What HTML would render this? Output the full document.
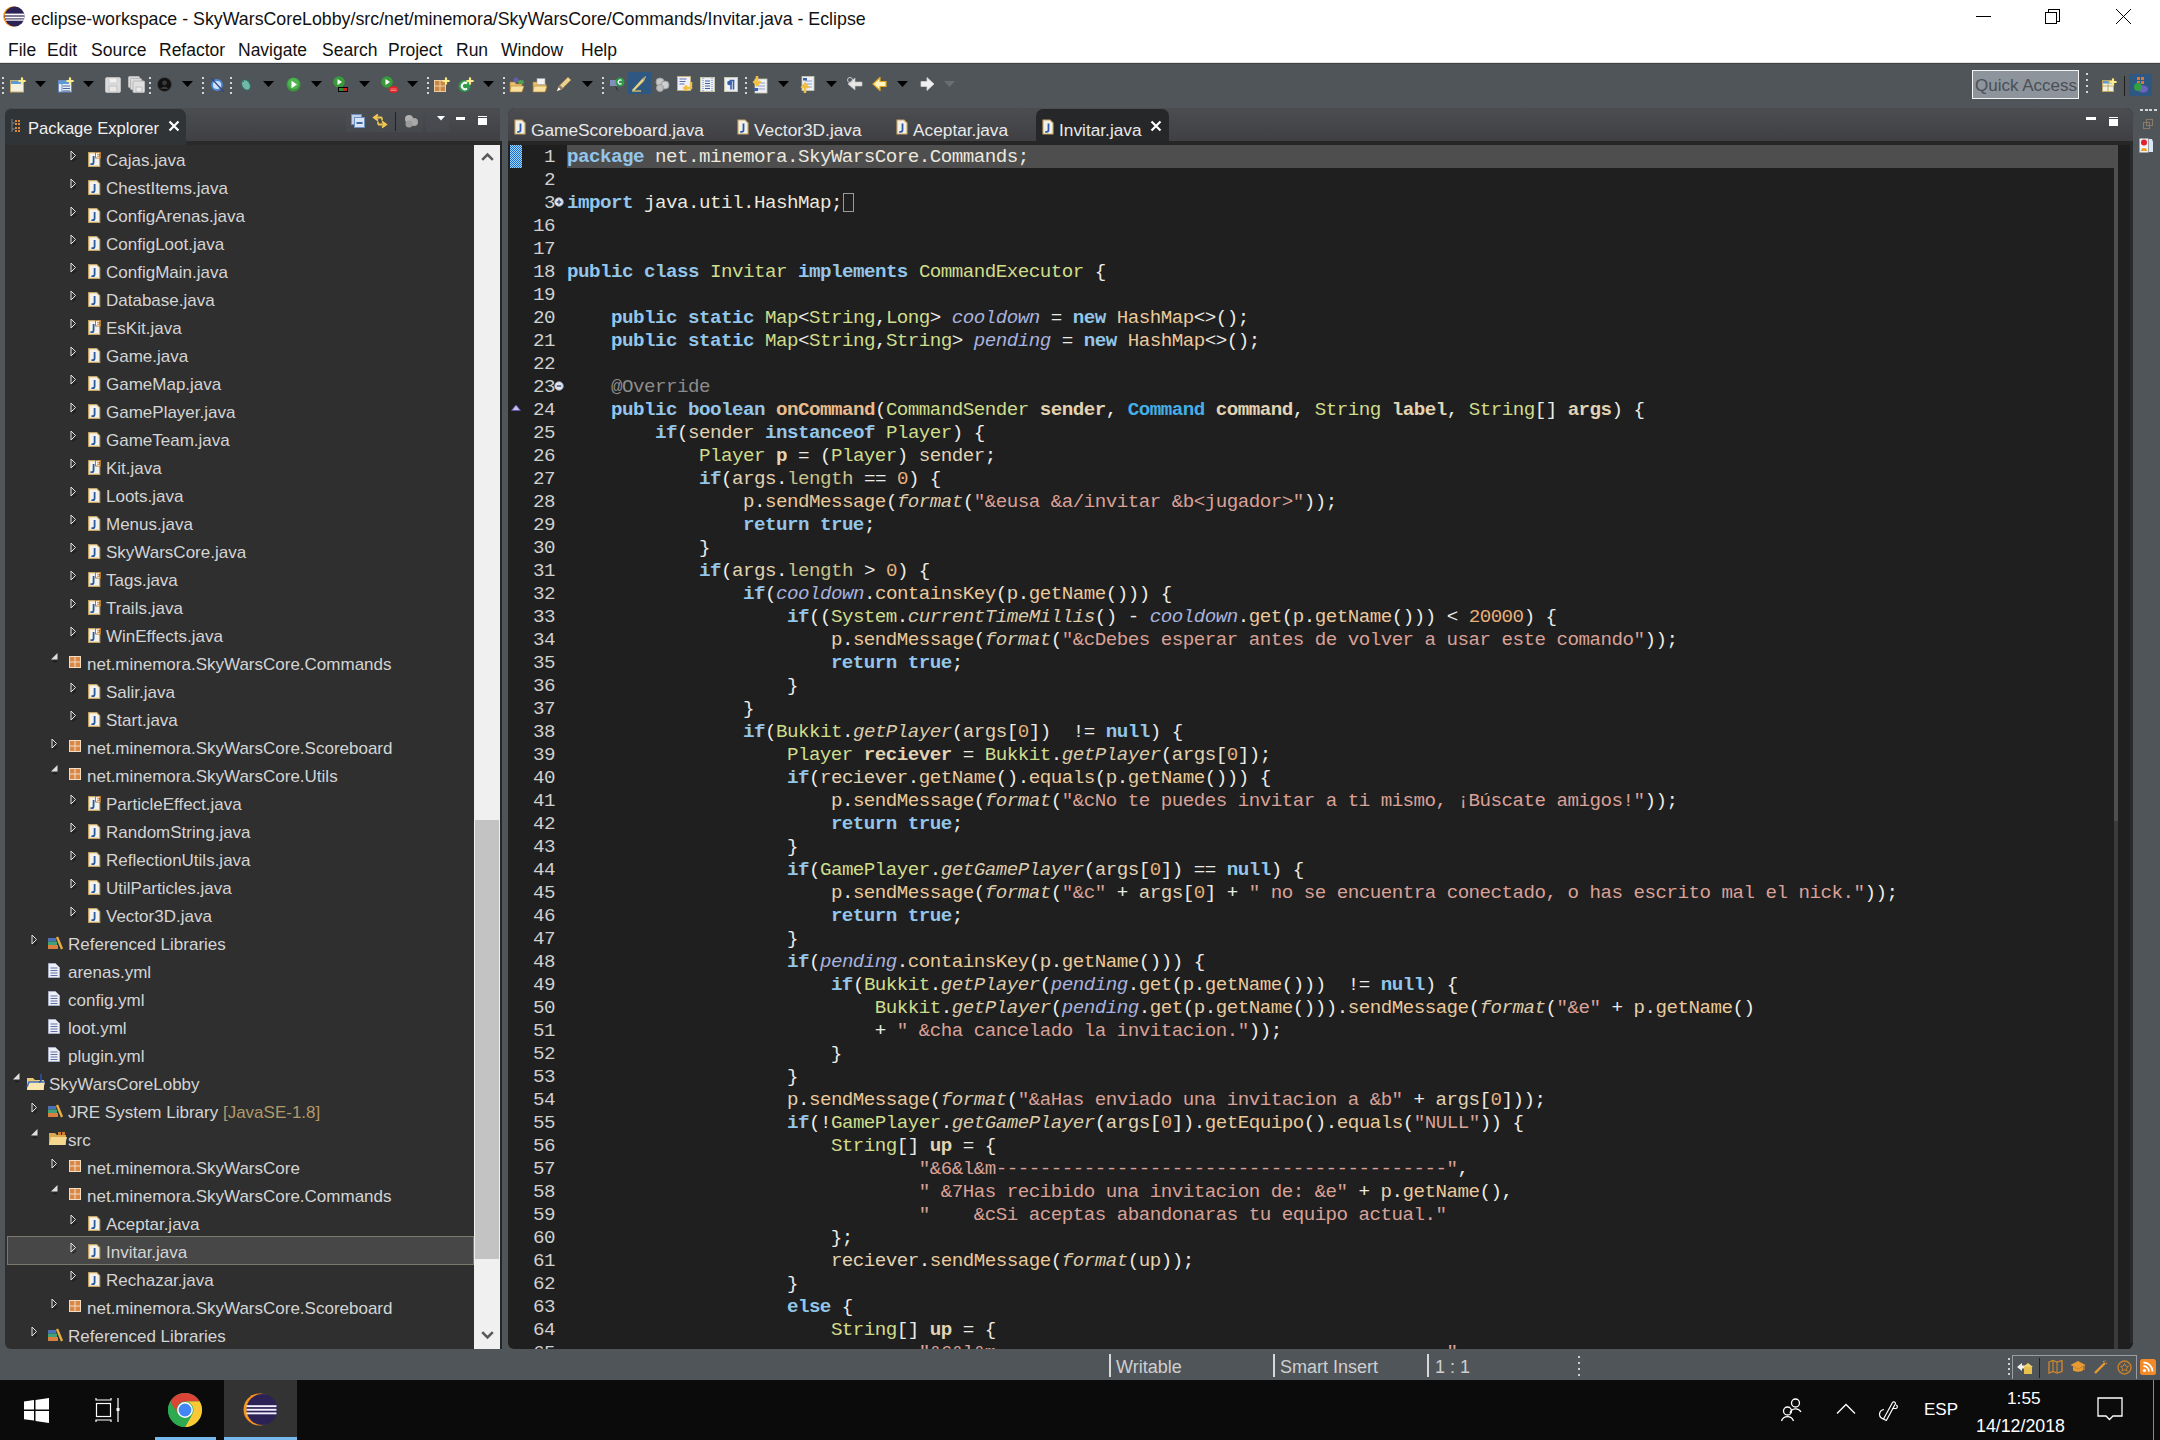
<!DOCTYPE html><html><head><meta charset="utf-8"><style>
*{margin:0;padding:0;box-sizing:border-box}
html,body{width:2160px;height:1440px;overflow:hidden;background:#505559;font-family:"Liberation Sans",sans-serif}
.abs{position:absolute}
.ti svg,.arr svg{display:block}
#title{position:absolute;left:0;top:0;width:2160px;height:64px;background:#fff}
#ttl{position:absolute;left:31px;top:6.5px;font-size:17.8px;color:#111;white-space:pre;line-height:24px}
.menu{position:absolute;top:38px;font-size:17.5px;color:#111;line-height:24px}
#toolbar{position:absolute;left:0;top:64px;width:2160px;height:44px;background:#505559}
#lp{position:absolute;left:5px;top:108px;width:495px;height:1241px;background:#2f2f2f;border-radius:7px 0 0 6px;overflow:hidden}
#lph{position:absolute;left:0;top:0;width:495px;height:33px;background:linear-gradient(#4b4d51,#404044)}
#lptab{position:absolute;left:0;top:1px;width:181px;height:36px;background:#313437;border-radius:6px 7px 0 0}
#lpband{position:absolute;left:181px;top:33px;width:314px;height:4px;background:#2a2a2b}
#tree{position:absolute;left:0;top:0;width:2160px;height:1440px}
.tt{position:absolute;font-size:17px;line-height:28px;color:#d4d4d4;white-space:pre}
.ti{position:absolute;width:20px;height:18px}
.arr{position:absolute}
.sel{position:absolute;left:7px;top:0;width:467px;height:29px;background:#474747;border:1px solid #7a7a6c}
#ed{position:absolute;left:508px;top:108px;width:1625px;height:1241px;background:#1f1f1f;border-radius:7px 7px 6px 6px;overflow:hidden}
#edh{position:absolute;left:0;top:0;width:1625px;height:33px;background:linear-gradient(#4b4d51,#404044)}
.cl{position:absolute;left:567px;height:23px;line-height:23px;font-family:"Liberation Mono",monospace;font-size:19.2px;letter-spacing:-0.52px;color:#ecebe6;white-space:pre}
.ln{position:absolute;left:515px;width:40px;text-align:right;height:23px;line-height:23px;font-family:"Liberation Mono",monospace;font-size:19.2px;letter-spacing:-0.52px;color:#d0d0d0;white-space:pre}
.k{color:#93c6ea;font-weight:bold}
.t{color:#cfdd8c}
.i{color:#45aee6;font-weight:bold}
.v{color:#e2d3b3}
.vd{color:#e2d3b3;font-weight:bold}
.f{color:#c9c48c}
.m{color:#ebc99b}
.md{color:#e9bb8b;font-weight:bold}
.s{color:#dccbab;font-style:italic}
.sf{color:#a8b2de;font-style:italic}
.str{color:#d9a198}
.n{color:#e8b07c}
.a{color:#8c8c8c}
.pk{color:#ece8de}
#status{position:absolute;left:0;top:1349px;width:2160px;height:31px;background:#505559}
.st{position:absolute;top:1356px;font-size:18px;line-height:22px;color:#cfcfcf}
.ssep{position:absolute;top:1354px;width:2px;height:23px;background:#d8d8d8}
#task{position:absolute;left:0;top:1380px;width:2160px;height:60px;background:#0b0b0c}
</style></head><body>
<div id="title"></div>
<div class="abs" style="left:2px;top:5px"><svg width="26" height="24" viewBox="0 0 26 24"><circle cx="11.5" cy="11.5" r="10.3" fill="#f7941e"/><circle cx="12.6" cy="11.5" r="10" fill="#2c2255"/><rect x="3" y="8.6" width="19.5" height="1.8" fill="#fff"/><rect x="3" y="11.6" width="19.5" height="1.8" fill="#fff"/><rect x="3.5" y="14.4" width="18.5" height="1.3" fill="#fff"/></svg></div>
<div id="ttl">eclipse-workspace - SkyWarsCoreLobby/src/net/minemora/SkyWarsCore/Commands/Invitar.java - Eclipse</div>
<div class="menu" style="left:8px">File</div>
<div class="menu" style="left:47px">Edit</div>
<div class="menu" style="left:91px">Source</div>
<div class="menu" style="left:159px">Refactor</div>
<div class="menu" style="left:238px">Navigate</div>
<div class="menu" style="left:322px">Search</div>
<div class="menu" style="left:388px">Project</div>
<div class="menu" style="left:456px">Run</div>
<div class="menu" style="left:501px">Window</div>
<div class="menu" style="left:581px">Help</div>
<div class="abs" style="left:1976px;top:16px;width:15px;height:1px;background:#000"></div>
<div class="abs" style="left:2045px;top:12px;width:12px;height:12px;border:1px solid #000"></div>
<div class="abs" style="left:2048px;top:9px;width:12px;height:12px;border-top:1px solid #000;border-right:1px solid #000"></div><div class="abs" style="left:2048px;top:9px;width:1px;height:3px;background:#000"></div><div class="abs" style="left:2057px;top:21px;width:3px;height:1px;background:#000"></div>
<div class="abs" style="left:2115px;top:8px"><svg width="17" height="17"><path d="M1 1l15 15M16 1l-15 15" stroke="#000" stroke-width="1"/></svg></div>
<div id="toolbar"></div>
<div class="abs" style="left:0;top:62px;width:2160px;height:1px;background:#e4e4e4"></div><div class="abs" style="left:0;top:63px;width:2160px;height:1px;background:#3e4144"></div>
<div class="abs" style="left:2px;top:77px;width:2px;height:2px;background:#d4d4d4"></div><div class="abs" style="left:2px;top:82px;width:2px;height:2px;background:#d4d4d4"></div><div class="abs" style="left:2px;top:87px;width:2px;height:2px;background:#d4d4d4"></div><div class="abs" style="left:2px;top:92px;width:2px;height:2px;background:#d4d4d4"></div>
<div class="abs" style="left:149px;top:77px;width:2px;height:2px;background:#d4d4d4"></div><div class="abs" style="left:149px;top:82px;width:2px;height:2px;background:#d4d4d4"></div><div class="abs" style="left:149px;top:87px;width:2px;height:2px;background:#d4d4d4"></div><div class="abs" style="left:149px;top:92px;width:2px;height:2px;background:#d4d4d4"></div>
<div class="abs" style="left:202px;top:77px;width:2px;height:2px;background:#d4d4d4"></div><div class="abs" style="left:202px;top:82px;width:2px;height:2px;background:#d4d4d4"></div><div class="abs" style="left:202px;top:87px;width:2px;height:2px;background:#d4d4d4"></div><div class="abs" style="left:202px;top:92px;width:2px;height:2px;background:#d4d4d4"></div>
<div class="abs" style="left:230px;top:77px;width:2px;height:2px;background:#d4d4d4"></div><div class="abs" style="left:230px;top:82px;width:2px;height:2px;background:#d4d4d4"></div><div class="abs" style="left:230px;top:87px;width:2px;height:2px;background:#d4d4d4"></div><div class="abs" style="left:230px;top:92px;width:2px;height:2px;background:#d4d4d4"></div>
<div class="abs" style="left:427px;top:77px;width:2px;height:2px;background:#d4d4d4"></div><div class="abs" style="left:427px;top:82px;width:2px;height:2px;background:#d4d4d4"></div><div class="abs" style="left:427px;top:87px;width:2px;height:2px;background:#d4d4d4"></div><div class="abs" style="left:427px;top:92px;width:2px;height:2px;background:#d4d4d4"></div>
<div class="abs" style="left:503px;top:77px;width:2px;height:2px;background:#d4d4d4"></div><div class="abs" style="left:503px;top:82px;width:2px;height:2px;background:#d4d4d4"></div><div class="abs" style="left:503px;top:87px;width:2px;height:2px;background:#d4d4d4"></div><div class="abs" style="left:503px;top:92px;width:2px;height:2px;background:#d4d4d4"></div>
<div class="abs" style="left:602px;top:77px;width:2px;height:2px;background:#d4d4d4"></div><div class="abs" style="left:602px;top:82px;width:2px;height:2px;background:#d4d4d4"></div><div class="abs" style="left:602px;top:87px;width:2px;height:2px;background:#d4d4d4"></div><div class="abs" style="left:602px;top:92px;width:2px;height:2px;background:#d4d4d4"></div>
<div class="abs" style="left:745px;top:77px;width:2px;height:2px;background:#d4d4d4"></div><div class="abs" style="left:745px;top:82px;width:2px;height:2px;background:#d4d4d4"></div><div class="abs" style="left:745px;top:87px;width:2px;height:2px;background:#d4d4d4"></div><div class="abs" style="left:745px;top:92px;width:2px;height:2px;background:#d4d4d4"></div>
<svg class="abs" style="left:10px;top:77px" width="16" height="16" viewBox="0 0 16 16"><rect x="0.5" y="3.5" width="13" height="11.5" fill="#f4f0e0" stroke="#c8b070"/><rect x="1" y="4" width="12" height="3" fill="#5a9ad8"/><path d="M8.5 4h7M12 0.5v7" stroke="#f8e060" stroke-width="2.2"/><path d="M8.5 4h7M12 0.5v7" stroke="#fff8c0" stroke-width="0.8"/></svg>
<svg class="abs" style="left:35px;top:81px" width="11" height="6" viewBox="0 0 11 6"><path d="M0 0h11l-5.5 6z" fill="#000"/></svg>
<svg class="abs" style="left:58px;top:77px" width="16" height="16" viewBox="0 0 16 16"><rect x="0.5" y="3.5" width="13" height="11.5" fill="#e8eef8" stroke="#6a8ac0"/><rect x="1" y="4" width="12" height="3" fill="#5a9ad8"/><path d="M5 9h7M5 11.5h7M5 14h7" stroke="#4a6aa0" stroke-width="1"/><path d="M4 7v8" stroke="#6a8ac0"/><path d="M8.5 4h7M12 0.5v7" stroke="#f8e060" stroke-width="2.2"/><path d="M8.5 4h7M12 0.5v7" stroke="#fff8c0" stroke-width="0.8"/></svg>
<svg class="abs" style="left:83px;top:81px" width="11" height="6" viewBox="0 0 11 6"><path d="M0 0h11l-5.5 6z" fill="#000"/></svg>
<svg class="abs" style="left:105px;top:77px" width="16" height="16" viewBox="0 0 16 16"><rect x="0.5" y="0.5" width="15" height="15" rx="1.5" fill="#dcdcdc" stroke="#bcbcbc"/><rect x="4" y="1" width="8" height="5" fill="#f0f0f0" stroke="#c0c0c0" stroke-width="0.6"/><rect x="4" y="9" width="8" height="6" fill="#e8e8e8" stroke="#b8b8b8" stroke-width="0.8"/></svg>
<svg class="abs" style="left:128px;top:76px" width="17" height="17" viewBox="0 0 17 17"><rect x="0.5" y="0.5" width="11" height="11" rx="1" fill="#d8d8d8" stroke="#b8b8b8"/><rect x="2.5" y="2.5" width="11" height="11" rx="1" fill="#dcdcdc" stroke="#b8b8b8"/><rect x="5" y="5" width="11.5" height="11.5" rx="1" fill="#e0e0e0" stroke="#b8b8b8"/><rect x="8" y="11" width="6" height="5" fill="#ececec" stroke="#b0b0b0" stroke-width="0.7"/></svg>
<svg class="abs" style="left:157px;top:77px" width="15" height="15" viewBox="0 0 15 15"><circle cx="7.5" cy="7.5" r="7" fill="#111" stroke="#444" stroke-width="0.8"/><circle cx="7.5" cy="5.8" r="2.4" fill="#3a3a3a"/><path d="M3.2 12q4.3-5 8.6 0" fill="#3a3a3a"/></svg>
<svg class="abs" style="left:182px;top:81px" width="11" height="6" viewBox="0 0 11 6"><path d="M0 0h11l-5.5 6z" fill="#000"/></svg>
<svg class="abs" style="left:210px;top:76px" width="15" height="17" viewBox="0 0 15 17"><circle cx="7" cy="9" r="5" fill="#cfe0f8" stroke="#4a8ad8" stroke-width="1.8"/><path d="M1 2l13 14" stroke="#2a4a90" stroke-width="1.2"/></svg>
<svg class="abs" style="left:240px;top:77px" width="12" height="15" viewBox="0 0 12 15"><ellipse cx="6" cy="8" rx="4" ry="5.5" fill="#70b8a8" stroke="#2e6a5e" stroke-width="0.8" transform="rotate(-30 6 8)"/><path d="M2 3l2 2M9 3l-1 2" stroke="#2e6a5e"/></svg>
<svg class="abs" style="left:263px;top:81px" width="11" height="6" viewBox="0 0 11 6"><path d="M0 0h11l-5.5 6z" fill="#000"/></svg>
<svg class="abs" style="left:286px;top:77px" width="15" height="15" viewBox="0 0 15 15"><circle cx="7.5" cy="7.5" r="7" fill="#3a9a3a"/><circle cx="7.5" cy="6.5" r="5.5" fill="#58b858" opacity="0.8"/><path d="M5.5 3.8l5.5 3.7-5.5 3.7z" fill="#fff"/></svg>
<svg class="abs" style="left:311px;top:81px" width="11" height="6" viewBox="0 0 11 6"><path d="M0 0h11l-5.5 6z" fill="#000"/></svg>
<svg class="abs" style="left:333px;top:76px" width="16" height="17" viewBox="0 0 16 17"><circle cx="6" cy="6" r="5.8" fill="#3a9a3a"/><path d="M4.5 3l4.5 3-4.5 3z" fill="#fff"/><rect x="5" y="11" width="10" height="5" fill="#000"/><rect x="6" y="12" width="4" height="3" fill="#2c8c2c"/><rect x="10" y="12" width="4" height="3" fill="#d02020"/></svg>
<svg class="abs" style="left:359px;top:81px" width="11" height="6" viewBox="0 0 11 6"><path d="M0 0h11l-5.5 6z" fill="#000"/></svg>
<svg class="abs" style="left:381px;top:76px" width="18" height="18" viewBox="0 0 18 18"><circle cx="6" cy="6" r="5.8" fill="#3a9a3a"/><path d="M4.5 3l4.5 3-4.5 3z" fill="#fff"/><ellipse cx="12.5" cy="13.5" rx="5" ry="3.5" fill="#d82828"/><path d="M9.5 13h6M9.5 14.5h6" stroke="#ff9090" stroke-width="0.8"/></svg>
<svg class="abs" style="left:407px;top:81px" width="11" height="6" viewBox="0 0 11 6"><path d="M0 0h11l-5.5 6z" fill="#000"/></svg>
<svg class="abs" style="left:434px;top:77px" width="16" height="16" viewBox="0 0 16 16"><rect x="0" y="3" width="12" height="12" fill="#f0d0a0"/><rect x="1" y="4" width="4.5" height="4.5" fill="#c88848"/><rect x="6.5" y="4" width="4.5" height="4.5" fill="#c88848"/><rect x="1" y="9.5" width="4.5" height="4.5" fill="#c88848"/><rect x="6.5" y="9.5" width="4.5" height="4.5" fill="#c88848"/><path d="M8.5 4h7M12 0.5v7" stroke="#f8e060" stroke-width="2.2"/><path d="M8.5 4h7M12 0.5v7" stroke="#fff8c0" stroke-width="0.8"/></svg>
<svg class="abs" style="left:458px;top:77px" width="16" height="16" viewBox="0 0 16 16"><circle cx="6.5" cy="9" r="6" fill="#2e9a4a"/><path d="M9 6.5a3.2 3.2 0 1 0 0 5" fill="none" stroke="#fff" stroke-width="2"/><path d="M8.5 4h7M12 0.5v7" stroke="#f8e060" stroke-width="2.2"/><path d="M8.5 4h7M12 0.5v7" stroke="#fff8c0" stroke-width="0.8"/></svg>
<svg class="abs" style="left:483px;top:81px" width="11" height="6" viewBox="0 0 11 6"><path d="M0 0h11l-5.5 6z" fill="#000"/></svg>
<svg class="abs" style="left:509px;top:76px" width="16" height="17" viewBox="0 0 16 17"><path d="M1 6h5l1 2h6v7h-12z" fill="#e8c070" stroke="#b08030" stroke-width="0.6"/><path d="M2 10h13l-2 6h-12z" fill="#f8e0a0" stroke="#b08030" stroke-width="0.6"/><circle cx="7" cy="4" r="2.5" fill="#6060b0"/><ellipse cx="12" cy="6" rx="3" ry="2" fill="#50a050"/></svg>
<svg class="abs" style="left:532px;top:77px" width="16" height="16" viewBox="0 0 16 16"><path d="M1 5h5l1 2h7v7h-13z" fill="#e8c070" stroke="#b08030" stroke-width="0.6"/><rect x="5" y="1.5" width="8" height="6" fill="#f4f4f4" stroke="#a0a0a0" stroke-width="0.6"/><path d="M2 9h13l-2 6h-12z" fill="#f8e0a0" stroke="#b08030" stroke-width="0.6"/></svg>
<svg class="abs" style="left:555px;top:76px" width="17" height="17" viewBox="0 0 17 17"><path d="M2 15l2-5 9-9 3 3-9 9z" fill="#e8d090" stroke="#a08040" stroke-width="0.6"/><path d="M4 10l3 3" stroke="#908070" stroke-width="2.5"/><path d="M2 15l1.5-3.5 2 2z" fill="#fff"/></svg>
<svg class="abs" style="left:582px;top:81px" width="11" height="6" viewBox="0 0 11 6"><path d="M0 0h11l-5.5 6z" fill="#000"/></svg>
<svg class="abs" style="left:609px;top:77px" width="16" height="16" viewBox="0 0 16 16"><rect x="1" y="3" width="7" height="6" fill="#8090b8"/><circle cx="11" cy="5" r="4.5" fill="#2e9a4a"/><path d="M12.5 3.5a2 2 0 1 0 0 3" fill="none" stroke="#fff" stroke-width="1.3"/><path d="M6 9l3 6-1-4z" fill="#222"/></svg>
<div class="abs" style="left:628px;top:72px;width:23px;height:22px;background:#2e5882"></div>
<svg class="abs" style="left:631px;top:75px" width="18" height="17" viewBox="0 0 18 17"><path d="M1 15l10-11 4-3-2 5-10 10z" fill="#e8d080"/><path d="M11 4l4-3-2 5z" fill="#b0a890"/><path d="M1 16h9" stroke="#e8d060" stroke-width="1.2"/></svg>
<svg class="abs" style="left:655px;top:77px" width="15" height="15" viewBox="0 0 15 15"><circle cx="5" cy="5" r="4" fill="#c8c8c8" stroke="#a0a0a0"/><circle cx="10" cy="8" r="4" fill="#d0d0d0" stroke="#a0a0a0"/><circle cx="5" cy="11" r="3.5" fill="#c0c0c0" stroke="#a0a0a0"/></svg>
<svg class="abs" style="left:677px;top:76px" width="16" height="16" viewBox="0 0 16 16"><rect x="0.5" y="0.5" width="13" height="14" fill="#f0f0f8" stroke="#c0b080"/><path d="M2.5 3h7M2.5 5.5h6M2.5 8h5" stroke="#5a70b0"/><path d="M14 6v6h-6" fill="none" stroke="#f0c040" stroke-width="2.4"/><path d="M10 9.5l-3 2.5 3 2.5" fill="none" stroke="#f0c040" stroke-width="2"/></svg>
<svg class="abs" style="left:700px;top:77px" width="15" height="15" viewBox="0 0 15 15"><rect x="0.5" y="0.5" width="14" height="14" fill="#eef0f8" stroke="#c8c8b0"/><path d="M3 1v13M12 1v13" stroke="#6080c0" stroke-dasharray="1 1"/><path d="M5 4h5M5 6.5h5M5 9h5M5 11.5h5" stroke="#4060a0" stroke-width="1.2"/></svg>
<svg class="abs" style="left:724px;top:77px" width="14" height="15" viewBox="0 0 14 15"><rect x="0.5" y="0.5" width="13" height="14" fill="#eef0f8" stroke="#c8c8b0"/><path d="M5.5 3.5h5M7 3.5v9M9.5 3.5v9" stroke="#3a60a8" stroke-width="1.6"/><circle cx="5.5" cy="6" r="2.3" fill="#3a60a8"/></svg>
<svg class="abs" style="left:752px;top:76px" width="16" height="18" viewBox="0 0 16 18"><rect x="3" y="3" width="12" height="14" fill="#eef0f8" stroke="#c8c8b0" stroke-width="0.8"/><path d="M6 7h7M6 10h7M6 13h7" stroke="#90a0c0"/><rect x="2" y="12" width="4" height="3" fill="#3a60a8"/><path d="M5 0v7M1.5 5l3.5 4 3.5-4" fill="none" stroke="#f0c040" stroke-width="2.6"/></svg>
<svg class="abs" style="left:778px;top:81px" width="11" height="6" viewBox="0 0 11 6"><path d="M0 0h11l-5.5 6z" fill="#000"/></svg>
<svg class="abs" style="left:800px;top:76px" width="16" height="18" viewBox="0 0 16 18"><rect x="2" y="0.5" width="12" height="14" fill="#eef0f8" stroke="#c8c8b0" stroke-width="0.8"/><path d="M5 5h7M5 8h7M5 11h7" stroke="#90a0c0"/><rect x="3" y="2" width="4" height="2.5" fill="#3a60a8"/><path d="M5 17v-7M1.5 12l3.5-4 3.5 4" fill="none" stroke="#f0c040" stroke-width="2.6"/></svg>
<svg class="abs" style="left:826px;top:81px" width="11" height="6" viewBox="0 0 11 6"><path d="M0 0h11l-5.5 6z" fill="#000"/></svg>
<svg class="abs" style="left:846px;top:77px" width="17" height="14" viewBox="0 0 17 14"><path d="M16 5h-7v-4l-7 6 7 6v-4h7z" fill="#e8e8e8" stroke="#c0c0c0" stroke-width="0.7"/><circle cx="4" cy="3" r="2.5" fill="none" stroke="#c8c8c8"/></svg>
<svg class="abs" style="left:872px;top:77px" width="15" height="14" viewBox="0 0 15 14"><path d="M14 4.5h-6v-4l-7 6.5 7 6.5v-4h6z" fill="#fff4c0" stroke="#e0a820" stroke-width="1.2"/></svg>
<svg class="abs" style="left:897px;top:81px" width="11" height="6" viewBox="0 0 11 6"><path d="M0 0h11l-5.5 6z" fill="#000"/></svg>
<svg class="abs" style="left:920px;top:77px" width="15" height="14" viewBox="0 0 15 14"><path d="M1 4.5h6v-4l7 6.5-7 6.5v-4h-6z" fill="#f0f0f0" stroke="#d0d0d0" stroke-width="0.8"/></svg>
<svg class="abs" style="left:944px;top:81px" width="11" height="6" viewBox="0 0 11 6"><path d="M0 0h11l-5.5 6z" fill="#6a6e72"/></svg>
<div class="abs" style="left:1972px;top:70px;width:107px;height:29px;background:#8d949b;border:1.5px solid #f4f4f4"></div>
<div class="abs" style="left:1975px;top:73px;font-size:17px;line-height:26px;color:#4a4f56;white-space:pre">Quick Access</div>
<div class="abs" style="left:2086px;top:73px;width:2px;height:2px;background:#d4d4d4"></div><div class="abs" style="left:2086px;top:79px;width:2px;height:2px;background:#d4d4d4"></div><div class="abs" style="left:2086px;top:85px;width:2px;height:2px;background:#d4d4d4"></div><div class="abs" style="left:2086px;top:91px;width:2px;height:2px;background:#d4d4d4"></div>
<svg class="abs" style="left:2102px;top:78px" width="15" height="15" viewBox="0 0 15 15"><rect x="0.5" y="2.5" width="11" height="11" fill="#f0f0e0" stroke="#c0a860"/><rect x="1" y="3" width="10" height="2.5" fill="#5a9ad8"/><path d="M6 3v10M1 8h10" stroke="#c0a860"/><path d="M7.5 4h7M11 0.5v7" stroke="#f8e060" stroke-width="2.2"/><path d="M7.5 4h7M11 0.5v7" stroke="#fff8c0" stroke-width="0.8"/></svg>
<div class="abs" style="left:2124px;top:76px;width:1px;height:20px;background:#1e1e1e"></div>
<div class="abs" style="left:2129px;top:74px;width:23px;height:22px;background:#2e5882"></div>
<svg class="abs" style="left:2133px;top:77px" width="16" height="16" viewBox="0 0 16 16"><rect x="4" y="0" width="3" height="3" fill="#d87838"/><rect x="8" y="0" width="3" height="3" fill="#d87838"/><rect x="4" y="4" width="3" height="3" fill="#d87838"/><rect x="8" y="4" width="3" height="3" fill="#d87838"/><ellipse cx="10" cy="12" rx="5" ry="3.5" fill="#7060c0"/><circle cx="5" cy="10" r="4" fill="#30a040"/></svg>
<div id="lp"><div id="lph"></div><div id="lpband"></div><div id="lptab"></div></div>
<div class="abs" style="left:28px;top:116.5px;font-size:16.6px;line-height:24px;color:#f0f0f0">Package Explorer</div>
<div class="abs" style="left:474px;top:145px;width:26px;height:1204px;background:#f0f0f0"></div>
<div class="abs" style="left:475px;top:820px;width:24px;height:439px;background:#c3c3c3"></div>
<div class="abs" style="left:500px;top:141px;width:2px;height:1208px;background:#232627"></div>
<svg class="abs" style="left:481px;top:152px" width="13" height="9" viewBox="0 0 13 9"><path d="M1.2 7.8l5.3-5.3 5.3 5.3" fill="none" stroke="#5a5a5a" stroke-width="2.6"/></svg>
<svg class="abs" style="left:481px;top:1331px" width="13" height="9" viewBox="0 0 13 9"><path d="M1.2 1.2l5.3 5.3 5.3-5.3" fill="none" stroke="#5a5a5a" stroke-width="2.6"/></svg>
<div id="tree"><div class="arr" style="left:70px;top:149.5px"><svg width="9" height="12" viewBox="0 0 9 12"><path d="M1 1l4.5 4.5-4.5 4.5z" fill="none" stroke="#e4e4e4" stroke-width="1"/><path d="M2.5 11.5l3.5-3" stroke="#111" stroke-width="1.2" opacity="0.6"/></svg></div>
<div class="ti" style="left:88px;top:152px"><svg width="13" height="15" viewBox="0 0 13 15"><path d="M0.7 0.7h8l3 3v10.6h-11z" fill="#f4f2ec" stroke="#caa860" stroke-width="1.2"/><path d="M5.6 4v6.2q0 2-2 2h-1.2" fill="none" stroke="#2a5aa0" stroke-width="1.8"/><rect x="7" y="0" width="6" height="6.5" fill="#b8782a"/><path d="M8.5 1.3h3M8.5 3.2h2.5M8.5 5.2h3M8.5 1.3v3.9" stroke="#fff" stroke-width="1" fill="none"/></svg></div>
<div class="tt" style="left:106px;top:147px">Cajas.java</div>
<div class="arr" style="left:70px;top:177.5px"><svg width="9" height="12" viewBox="0 0 9 12"><path d="M1 1l4.5 4.5-4.5 4.5z" fill="none" stroke="#e4e4e4" stroke-width="1"/><path d="M2.5 11.5l3.5-3" stroke="#111" stroke-width="1.2" opacity="0.6"/></svg></div>
<div class="ti" style="left:88px;top:180px"><svg width="13" height="15" viewBox="0 0 13 15"><path d="M0.7 0.7h8l3 3v10.6h-11z" fill="#f4f2ec" stroke="#caa860" stroke-width="1.2"/><path d="M6.6 4v6.2q0 2-2 2h-1.2" fill="none" stroke="#2a5aa0" stroke-width="1.8"/></svg></div>
<div class="tt" style="left:106px;top:175px">ChestItems.java</div>
<div class="arr" style="left:70px;top:205.5px"><svg width="9" height="12" viewBox="0 0 9 12"><path d="M1 1l4.5 4.5-4.5 4.5z" fill="none" stroke="#e4e4e4" stroke-width="1"/><path d="M2.5 11.5l3.5-3" stroke="#111" stroke-width="1.2" opacity="0.6"/></svg></div>
<div class="ti" style="left:88px;top:208px"><svg width="13" height="15" viewBox="0 0 13 15"><path d="M0.7 0.7h8l3 3v10.6h-11z" fill="#f4f2ec" stroke="#caa860" stroke-width="1.2"/><path d="M6.6 4v6.2q0 2-2 2h-1.2" fill="none" stroke="#2a5aa0" stroke-width="1.8"/></svg></div>
<div class="tt" style="left:106px;top:203px">ConfigArenas.java</div>
<div class="arr" style="left:70px;top:233.5px"><svg width="9" height="12" viewBox="0 0 9 12"><path d="M1 1l4.5 4.5-4.5 4.5z" fill="none" stroke="#e4e4e4" stroke-width="1"/><path d="M2.5 11.5l3.5-3" stroke="#111" stroke-width="1.2" opacity="0.6"/></svg></div>
<div class="ti" style="left:88px;top:236px"><svg width="13" height="15" viewBox="0 0 13 15"><path d="M0.7 0.7h8l3 3v10.6h-11z" fill="#f4f2ec" stroke="#caa860" stroke-width="1.2"/><path d="M6.6 4v6.2q0 2-2 2h-1.2" fill="none" stroke="#2a5aa0" stroke-width="1.8"/></svg></div>
<div class="tt" style="left:106px;top:231px">ConfigLoot.java</div>
<div class="arr" style="left:70px;top:261.5px"><svg width="9" height="12" viewBox="0 0 9 12"><path d="M1 1l4.5 4.5-4.5 4.5z" fill="none" stroke="#e4e4e4" stroke-width="1"/><path d="M2.5 11.5l3.5-3" stroke="#111" stroke-width="1.2" opacity="0.6"/></svg></div>
<div class="ti" style="left:88px;top:264px"><svg width="13" height="15" viewBox="0 0 13 15"><path d="M0.7 0.7h8l3 3v10.6h-11z" fill="#f4f2ec" stroke="#caa860" stroke-width="1.2"/><path d="M6.6 4v6.2q0 2-2 2h-1.2" fill="none" stroke="#2a5aa0" stroke-width="1.8"/></svg></div>
<div class="tt" style="left:106px;top:259px">ConfigMain.java</div>
<div class="arr" style="left:70px;top:289.5px"><svg width="9" height="12" viewBox="0 0 9 12"><path d="M1 1l4.5 4.5-4.5 4.5z" fill="none" stroke="#e4e4e4" stroke-width="1"/><path d="M2.5 11.5l3.5-3" stroke="#111" stroke-width="1.2" opacity="0.6"/></svg></div>
<div class="ti" style="left:88px;top:292px"><svg width="13" height="15" viewBox="0 0 13 15"><path d="M0.7 0.7h8l3 3v10.6h-11z" fill="#f4f2ec" stroke="#caa860" stroke-width="1.2"/><path d="M6.6 4v6.2q0 2-2 2h-1.2" fill="none" stroke="#2a5aa0" stroke-width="1.8"/></svg></div>
<div class="tt" style="left:106px;top:287px">Database.java</div>
<div class="arr" style="left:70px;top:317.5px"><svg width="9" height="12" viewBox="0 0 9 12"><path d="M1 1l4.5 4.5-4.5 4.5z" fill="none" stroke="#e4e4e4" stroke-width="1"/><path d="M2.5 11.5l3.5-3" stroke="#111" stroke-width="1.2" opacity="0.6"/></svg></div>
<div class="ti" style="left:88px;top:320px"><svg width="13" height="15" viewBox="0 0 13 15"><path d="M0.7 0.7h8l3 3v10.6h-11z" fill="#f4f2ec" stroke="#caa860" stroke-width="1.2"/><path d="M5.6 4v6.2q0 2-2 2h-1.2" fill="none" stroke="#2a5aa0" stroke-width="1.8"/><rect x="7" y="0" width="6" height="6.5" fill="#b8782a"/><path d="M8.5 1.3h3M8.5 3.2h2.5M8.5 5.2h3M8.5 1.3v3.9" stroke="#fff" stroke-width="1" fill="none"/></svg></div>
<div class="tt" style="left:106px;top:315px">EsKit.java</div>
<div class="arr" style="left:70px;top:345.5px"><svg width="9" height="12" viewBox="0 0 9 12"><path d="M1 1l4.5 4.5-4.5 4.5z" fill="none" stroke="#e4e4e4" stroke-width="1"/><path d="M2.5 11.5l3.5-3" stroke="#111" stroke-width="1.2" opacity="0.6"/></svg></div>
<div class="ti" style="left:88px;top:348px"><svg width="13" height="15" viewBox="0 0 13 15"><path d="M0.7 0.7h8l3 3v10.6h-11z" fill="#f4f2ec" stroke="#caa860" stroke-width="1.2"/><path d="M6.6 4v6.2q0 2-2 2h-1.2" fill="none" stroke="#2a5aa0" stroke-width="1.8"/></svg></div>
<div class="tt" style="left:106px;top:343px">Game.java</div>
<div class="arr" style="left:70px;top:373.5px"><svg width="9" height="12" viewBox="0 0 9 12"><path d="M1 1l4.5 4.5-4.5 4.5z" fill="none" stroke="#e4e4e4" stroke-width="1"/><path d="M2.5 11.5l3.5-3" stroke="#111" stroke-width="1.2" opacity="0.6"/></svg></div>
<div class="ti" style="left:88px;top:376px"><svg width="13" height="15" viewBox="0 0 13 15"><path d="M0.7 0.7h8l3 3v10.6h-11z" fill="#f4f2ec" stroke="#caa860" stroke-width="1.2"/><path d="M6.6 4v6.2q0 2-2 2h-1.2" fill="none" stroke="#2a5aa0" stroke-width="1.8"/></svg></div>
<div class="tt" style="left:106px;top:371px">GameMap.java</div>
<div class="arr" style="left:70px;top:401.5px"><svg width="9" height="12" viewBox="0 0 9 12"><path d="M1 1l4.5 4.5-4.5 4.5z" fill="none" stroke="#e4e4e4" stroke-width="1"/><path d="M2.5 11.5l3.5-3" stroke="#111" stroke-width="1.2" opacity="0.6"/></svg></div>
<div class="ti" style="left:88px;top:404px"><svg width="13" height="15" viewBox="0 0 13 15"><path d="M0.7 0.7h8l3 3v10.6h-11z" fill="#f4f2ec" stroke="#caa860" stroke-width="1.2"/><path d="M6.6 4v6.2q0 2-2 2h-1.2" fill="none" stroke="#2a5aa0" stroke-width="1.8"/></svg></div>
<div class="tt" style="left:106px;top:399px">GamePlayer.java</div>
<div class="arr" style="left:70px;top:429.5px"><svg width="9" height="12" viewBox="0 0 9 12"><path d="M1 1l4.5 4.5-4.5 4.5z" fill="none" stroke="#e4e4e4" stroke-width="1"/><path d="M2.5 11.5l3.5-3" stroke="#111" stroke-width="1.2" opacity="0.6"/></svg></div>
<div class="ti" style="left:88px;top:432px"><svg width="13" height="15" viewBox="0 0 13 15"><path d="M0.7 0.7h8l3 3v10.6h-11z" fill="#f4f2ec" stroke="#caa860" stroke-width="1.2"/><path d="M6.6 4v6.2q0 2-2 2h-1.2" fill="none" stroke="#2a5aa0" stroke-width="1.8"/></svg></div>
<div class="tt" style="left:106px;top:427px">GameTeam.java</div>
<div class="arr" style="left:70px;top:457.5px"><svg width="9" height="12" viewBox="0 0 9 12"><path d="M1 1l4.5 4.5-4.5 4.5z" fill="none" stroke="#e4e4e4" stroke-width="1"/><path d="M2.5 11.5l3.5-3" stroke="#111" stroke-width="1.2" opacity="0.6"/></svg></div>
<div class="ti" style="left:88px;top:460px"><svg width="13" height="15" viewBox="0 0 13 15"><path d="M0.7 0.7h8l3 3v10.6h-11z" fill="#f4f2ec" stroke="#caa860" stroke-width="1.2"/><path d="M5.6 4v6.2q0 2-2 2h-1.2" fill="none" stroke="#2a5aa0" stroke-width="1.8"/><rect x="7" y="0" width="6" height="6.5" fill="#b8782a"/><path d="M8.5 1.3h3M8.5 3.2h2.5M8.5 5.2h3M8.5 1.3v3.9" stroke="#fff" stroke-width="1" fill="none"/></svg></div>
<div class="tt" style="left:106px;top:455px">Kit.java</div>
<div class="arr" style="left:70px;top:485.5px"><svg width="9" height="12" viewBox="0 0 9 12"><path d="M1 1l4.5 4.5-4.5 4.5z" fill="none" stroke="#e4e4e4" stroke-width="1"/><path d="M2.5 11.5l3.5-3" stroke="#111" stroke-width="1.2" opacity="0.6"/></svg></div>
<div class="ti" style="left:88px;top:488px"><svg width="13" height="15" viewBox="0 0 13 15"><path d="M0.7 0.7h8l3 3v10.6h-11z" fill="#f4f2ec" stroke="#caa860" stroke-width="1.2"/><path d="M6.6 4v6.2q0 2-2 2h-1.2" fill="none" stroke="#2a5aa0" stroke-width="1.8"/></svg></div>
<div class="tt" style="left:106px;top:483px">Loots.java</div>
<div class="arr" style="left:70px;top:513.5px"><svg width="9" height="12" viewBox="0 0 9 12"><path d="M1 1l4.5 4.5-4.5 4.5z" fill="none" stroke="#e4e4e4" stroke-width="1"/><path d="M2.5 11.5l3.5-3" stroke="#111" stroke-width="1.2" opacity="0.6"/></svg></div>
<div class="ti" style="left:88px;top:516px"><svg width="13" height="15" viewBox="0 0 13 15"><path d="M0.7 0.7h8l3 3v10.6h-11z" fill="#f4f2ec" stroke="#caa860" stroke-width="1.2"/><path d="M6.6 4v6.2q0 2-2 2h-1.2" fill="none" stroke="#2a5aa0" stroke-width="1.8"/></svg></div>
<div class="tt" style="left:106px;top:511px">Menus.java</div>
<div class="arr" style="left:70px;top:541.5px"><svg width="9" height="12" viewBox="0 0 9 12"><path d="M1 1l4.5 4.5-4.5 4.5z" fill="none" stroke="#e4e4e4" stroke-width="1"/><path d="M2.5 11.5l3.5-3" stroke="#111" stroke-width="1.2" opacity="0.6"/></svg></div>
<div class="ti" style="left:88px;top:544px"><svg width="13" height="15" viewBox="0 0 13 15"><path d="M0.7 0.7h8l3 3v10.6h-11z" fill="#f4f2ec" stroke="#caa860" stroke-width="1.2"/><path d="M6.6 4v6.2q0 2-2 2h-1.2" fill="none" stroke="#2a5aa0" stroke-width="1.8"/></svg></div>
<div class="tt" style="left:106px;top:539px">SkyWarsCore.java</div>
<div class="arr" style="left:70px;top:569.5px"><svg width="9" height="12" viewBox="0 0 9 12"><path d="M1 1l4.5 4.5-4.5 4.5z" fill="none" stroke="#e4e4e4" stroke-width="1"/><path d="M2.5 11.5l3.5-3" stroke="#111" stroke-width="1.2" opacity="0.6"/></svg></div>
<div class="ti" style="left:88px;top:572px"><svg width="13" height="15" viewBox="0 0 13 15"><path d="M0.7 0.7h8l3 3v10.6h-11z" fill="#f4f2ec" stroke="#caa860" stroke-width="1.2"/><path d="M5.6 4v6.2q0 2-2 2h-1.2" fill="none" stroke="#2a5aa0" stroke-width="1.8"/><rect x="7" y="0" width="6" height="6.5" fill="#b8782a"/><path d="M8.5 1.3h3M8.5 3.2h2.5M8.5 5.2h3M8.5 1.3v3.9" stroke="#fff" stroke-width="1" fill="none"/></svg></div>
<div class="tt" style="left:106px;top:567px">Tags.java</div>
<div class="arr" style="left:70px;top:597.5px"><svg width="9" height="12" viewBox="0 0 9 12"><path d="M1 1l4.5 4.5-4.5 4.5z" fill="none" stroke="#e4e4e4" stroke-width="1"/><path d="M2.5 11.5l3.5-3" stroke="#111" stroke-width="1.2" opacity="0.6"/></svg></div>
<div class="ti" style="left:88px;top:600px"><svg width="13" height="15" viewBox="0 0 13 15"><path d="M0.7 0.7h8l3 3v10.6h-11z" fill="#f4f2ec" stroke="#caa860" stroke-width="1.2"/><path d="M5.6 4v6.2q0 2-2 2h-1.2" fill="none" stroke="#2a5aa0" stroke-width="1.8"/><rect x="7" y="0" width="6" height="6.5" fill="#b8782a"/><path d="M8.5 1.3h3M8.5 3.2h2.5M8.5 5.2h3M8.5 1.3v3.9" stroke="#fff" stroke-width="1" fill="none"/></svg></div>
<div class="tt" style="left:106px;top:595px">Trails.java</div>
<div class="arr" style="left:70px;top:625.5px"><svg width="9" height="12" viewBox="0 0 9 12"><path d="M1 1l4.5 4.5-4.5 4.5z" fill="none" stroke="#e4e4e4" stroke-width="1"/><path d="M2.5 11.5l3.5-3" stroke="#111" stroke-width="1.2" opacity="0.6"/></svg></div>
<div class="ti" style="left:88px;top:628px"><svg width="13" height="15" viewBox="0 0 13 15"><path d="M0.7 0.7h8l3 3v10.6h-11z" fill="#f4f2ec" stroke="#caa860" stroke-width="1.2"/><path d="M5.6 4v6.2q0 2-2 2h-1.2" fill="none" stroke="#2a5aa0" stroke-width="1.8"/><rect x="7" y="0" width="6" height="6.5" fill="#b8782a"/><path d="M8.5 1.3h3M8.5 3.2h2.5M8.5 5.2h3M8.5 1.3v3.9" stroke="#fff" stroke-width="1" fill="none"/></svg></div>
<div class="tt" style="left:106px;top:623px">WinEffects.java</div>
<div class="arr" style="left:50px;top:652px"><svg width="9" height="11" viewBox="0 0 9 11"><path d="M7.5 1v6.5h-6.5z" fill="#e0e0e0"/><path d="M3 9.5h4" stroke="#111" stroke-width="1.2" opacity="0.7"/></svg></div>
<div class="ti" style="left:69px;top:656px"><svg width="12" height="12" viewBox="0 0 12 12"><rect x="0" y="0" width="12" height="12" fill="#f4dcc0"/><rect x="1" y="1" width="4.5" height="4.5" fill="#d88848"/><rect x="6.5" y="1" width="4.5" height="4.5" fill="#d88848"/><rect x="1" y="6.5" width="4.5" height="4.5" fill="#d88848"/><rect x="6.5" y="6.5" width="4.5" height="4.5" fill="#d88848"/></svg></div>
<div class="tt" style="left:87px;top:651px">net.minemora.SkyWarsCore.Commands</div>
<div class="arr" style="left:70px;top:681.5px"><svg width="9" height="12" viewBox="0 0 9 12"><path d="M1 1l4.5 4.5-4.5 4.5z" fill="none" stroke="#e4e4e4" stroke-width="1"/><path d="M2.5 11.5l3.5-3" stroke="#111" stroke-width="1.2" opacity="0.6"/></svg></div>
<div class="ti" style="left:88px;top:684px"><svg width="13" height="15" viewBox="0 0 13 15"><path d="M0.7 0.7h8l3 3v10.6h-11z" fill="#f4f2ec" stroke="#caa860" stroke-width="1.2"/><path d="M6.6 4v6.2q0 2-2 2h-1.2" fill="none" stroke="#2a5aa0" stroke-width="1.8"/></svg></div>
<div class="tt" style="left:106px;top:679px">Salir.java</div>
<div class="arr" style="left:70px;top:709.5px"><svg width="9" height="12" viewBox="0 0 9 12"><path d="M1 1l4.5 4.5-4.5 4.5z" fill="none" stroke="#e4e4e4" stroke-width="1"/><path d="M2.5 11.5l3.5-3" stroke="#111" stroke-width="1.2" opacity="0.6"/></svg></div>
<div class="ti" style="left:88px;top:712px"><svg width="13" height="15" viewBox="0 0 13 15"><path d="M0.7 0.7h8l3 3v10.6h-11z" fill="#f4f2ec" stroke="#caa860" stroke-width="1.2"/><path d="M6.6 4v6.2q0 2-2 2h-1.2" fill="none" stroke="#2a5aa0" stroke-width="1.8"/></svg></div>
<div class="tt" style="left:106px;top:707px">Start.java</div>
<div class="arr" style="left:51px;top:737.5px"><svg width="9" height="12" viewBox="0 0 9 12"><path d="M1 1l4.5 4.5-4.5 4.5z" fill="none" stroke="#e4e4e4" stroke-width="1"/><path d="M2.5 11.5l3.5-3" stroke="#111" stroke-width="1.2" opacity="0.6"/></svg></div>
<div class="ti" style="left:69px;top:740px"><svg width="12" height="12" viewBox="0 0 12 12"><rect x="0" y="0" width="12" height="12" fill="#f4dcc0"/><rect x="1" y="1" width="4.5" height="4.5" fill="#d88848"/><rect x="6.5" y="1" width="4.5" height="4.5" fill="#d88848"/><rect x="1" y="6.5" width="4.5" height="4.5" fill="#d88848"/><rect x="6.5" y="6.5" width="4.5" height="4.5" fill="#d88848"/></svg></div>
<div class="tt" style="left:87px;top:735px">net.minemora.SkyWarsCore.Scoreboard</div>
<div class="arr" style="left:50px;top:764px"><svg width="9" height="11" viewBox="0 0 9 11"><path d="M7.5 1v6.5h-6.5z" fill="#e0e0e0"/><path d="M3 9.5h4" stroke="#111" stroke-width="1.2" opacity="0.7"/></svg></div>
<div class="ti" style="left:69px;top:768px"><svg width="12" height="12" viewBox="0 0 12 12"><rect x="0" y="0" width="12" height="12" fill="#f4dcc0"/><rect x="1" y="1" width="4.5" height="4.5" fill="#d88848"/><rect x="6.5" y="1" width="4.5" height="4.5" fill="#d88848"/><rect x="1" y="6.5" width="4.5" height="4.5" fill="#d88848"/><rect x="6.5" y="6.5" width="4.5" height="4.5" fill="#d88848"/></svg></div>
<div class="tt" style="left:87px;top:763px">net.minemora.SkyWarsCore.Utils</div>
<div class="arr" style="left:70px;top:793.5px"><svg width="9" height="12" viewBox="0 0 9 12"><path d="M1 1l4.5 4.5-4.5 4.5z" fill="none" stroke="#e4e4e4" stroke-width="1"/><path d="M2.5 11.5l3.5-3" stroke="#111" stroke-width="1.2" opacity="0.6"/></svg></div>
<div class="ti" style="left:88px;top:796px"><svg width="13" height="15" viewBox="0 0 13 15"><path d="M0.7 0.7h8l3 3v10.6h-11z" fill="#f4f2ec" stroke="#caa860" stroke-width="1.2"/><path d="M5.6 4v6.2q0 2-2 2h-1.2" fill="none" stroke="#2a5aa0" stroke-width="1.8"/><rect x="7" y="0" width="6" height="6.5" fill="#b8782a"/><path d="M8.5 1.3h3M8.5 3.2h2.5M8.5 5.2h3M8.5 1.3v3.9" stroke="#fff" stroke-width="1" fill="none"/></svg></div>
<div class="tt" style="left:106px;top:791px">ParticleEffect.java</div>
<div class="arr" style="left:70px;top:821.5px"><svg width="9" height="12" viewBox="0 0 9 12"><path d="M1 1l4.5 4.5-4.5 4.5z" fill="none" stroke="#e4e4e4" stroke-width="1"/><path d="M2.5 11.5l3.5-3" stroke="#111" stroke-width="1.2" opacity="0.6"/></svg></div>
<div class="ti" style="left:88px;top:824px"><svg width="13" height="15" viewBox="0 0 13 15"><path d="M0.7 0.7h8l3 3v10.6h-11z" fill="#f4f2ec" stroke="#caa860" stroke-width="1.2"/><path d="M6.6 4v6.2q0 2-2 2h-1.2" fill="none" stroke="#2a5aa0" stroke-width="1.8"/></svg></div>
<div class="tt" style="left:106px;top:819px">RandomString.java</div>
<div class="arr" style="left:70px;top:849.5px"><svg width="9" height="12" viewBox="0 0 9 12"><path d="M1 1l4.5 4.5-4.5 4.5z" fill="none" stroke="#e4e4e4" stroke-width="1"/><path d="M2.5 11.5l3.5-3" stroke="#111" stroke-width="1.2" opacity="0.6"/></svg></div>
<div class="ti" style="left:88px;top:852px"><svg width="13" height="15" viewBox="0 0 13 15"><path d="M0.7 0.7h8l3 3v10.6h-11z" fill="#f4f2ec" stroke="#caa860" stroke-width="1.2"/><path d="M6.6 4v6.2q0 2-2 2h-1.2" fill="none" stroke="#2a5aa0" stroke-width="1.8"/></svg></div>
<div class="tt" style="left:106px;top:847px">ReflectionUtils.java</div>
<div class="arr" style="left:70px;top:877.5px"><svg width="9" height="12" viewBox="0 0 9 12"><path d="M1 1l4.5 4.5-4.5 4.5z" fill="none" stroke="#e4e4e4" stroke-width="1"/><path d="M2.5 11.5l3.5-3" stroke="#111" stroke-width="1.2" opacity="0.6"/></svg></div>
<div class="ti" style="left:88px;top:880px"><svg width="13" height="15" viewBox="0 0 13 15"><path d="M0.7 0.7h8l3 3v10.6h-11z" fill="#f4f2ec" stroke="#caa860" stroke-width="1.2"/><path d="M6.6 4v6.2q0 2-2 2h-1.2" fill="none" stroke="#2a5aa0" stroke-width="1.8"/></svg></div>
<div class="tt" style="left:106px;top:875px">UtilParticles.java</div>
<div class="arr" style="left:70px;top:905.5px"><svg width="9" height="12" viewBox="0 0 9 12"><path d="M1 1l4.5 4.5-4.5 4.5z" fill="none" stroke="#e4e4e4" stroke-width="1"/><path d="M2.5 11.5l3.5-3" stroke="#111" stroke-width="1.2" opacity="0.6"/></svg></div>
<div class="ti" style="left:88px;top:908px"><svg width="13" height="15" viewBox="0 0 13 15"><path d="M0.7 0.7h8l3 3v10.6h-11z" fill="#f4f2ec" stroke="#caa860" stroke-width="1.2"/><path d="M6.6 4v6.2q0 2-2 2h-1.2" fill="none" stroke="#2a5aa0" stroke-width="1.8"/></svg></div>
<div class="tt" style="left:106px;top:903px">Vector3D.java</div>
<div class="arr" style="left:31px;top:933.5px"><svg width="9" height="12" viewBox="0 0 9 12"><path d="M1 1l4.5 4.5-4.5 4.5z" fill="none" stroke="#e4e4e4" stroke-width="1"/><path d="M2.5 11.5l3.5-3" stroke="#111" stroke-width="1.2" opacity="0.6"/></svg></div>
<div class="ti" style="left:48px;top:936px"><svg width="15" height="14" viewBox="0 0 15 14"><rect x="0" y="2" width="8" height="3.5" fill="#4a70b8"/><rect x="0" y="5.5" width="9" height="3.5" fill="#40a078"/><rect x="0" y="9" width="10" height="4" fill="#d88040"/><path d="M9 1l5 12" stroke="#e8b040" stroke-width="2.4"/></svg></div>
<div class="tt" style="left:68px;top:931px">Referenced Libraries</div>
<div class="ti" style="left:48px;top:963px"><svg width="12" height="15" viewBox="0 0 12 15"><path d="M0.5 0.5h7l4 4v10h-11z" fill="#eef0f6" stroke="#a8b0c8" stroke-width="1"/><path d="M2.5 5h7M2.5 7.5h7M2.5 10h7M2.5 12.5h7" stroke="#6070a8" stroke-width="1"/></svg></div>
<div class="tt" style="left:68px;top:959px">arenas.yml</div>
<div class="ti" style="left:48px;top:991px"><svg width="12" height="15" viewBox="0 0 12 15"><path d="M0.5 0.5h7l4 4v10h-11z" fill="#eef0f6" stroke="#a8b0c8" stroke-width="1"/><path d="M2.5 5h7M2.5 7.5h7M2.5 10h7M2.5 12.5h7" stroke="#6070a8" stroke-width="1"/></svg></div>
<div class="tt" style="left:68px;top:987px">config.yml</div>
<div class="ti" style="left:48px;top:1019px"><svg width="12" height="15" viewBox="0 0 12 15"><path d="M0.5 0.5h7l4 4v10h-11z" fill="#eef0f6" stroke="#a8b0c8" stroke-width="1"/><path d="M2.5 5h7M2.5 7.5h7M2.5 10h7M2.5 12.5h7" stroke="#6070a8" stroke-width="1"/></svg></div>
<div class="tt" style="left:68px;top:1015px">loot.yml</div>
<div class="ti" style="left:48px;top:1047px"><svg width="12" height="15" viewBox="0 0 12 15"><path d="M0.5 0.5h7l4 4v10h-11z" fill="#eef0f6" stroke="#a8b0c8" stroke-width="1"/><path d="M2.5 5h7M2.5 7.5h7M2.5 10h7M2.5 12.5h7" stroke="#6070a8" stroke-width="1"/></svg></div>
<div class="tt" style="left:68px;top:1043px">plugin.yml</div>
<div class="arr" style="left:12px;top:1072px"><svg width="9" height="11" viewBox="0 0 9 11"><path d="M7.5 1v6.5h-6.5z" fill="#e0e0e0"/><path d="M3 9.5h4" stroke="#111" stroke-width="1.2" opacity="0.7"/></svg></div>
<div class="ti" style="left:26px;top:1073px"><svg width="20" height="18" viewBox="0 0 20 18"><path d="M1 5h6l2 2h9v10h-17z" fill="#e8c870"/><path d="M3 9h16l-2 8h-16z" fill="#f8e8b0"/><path d="M1 14l2-5h16" fill="none" stroke="#4070c0" stroke-width="1.5"/><path d="M15 1v6q0 2-2 2" fill="none" stroke="#2850a8" stroke-width="1.6"/></svg></div>
<div class="tt" style="left:49px;top:1071px">SkyWarsCoreLobby</div>
<div class="arr" style="left:31px;top:1101.5px"><svg width="9" height="12" viewBox="0 0 9 12"><path d="M1 1l4.5 4.5-4.5 4.5z" fill="none" stroke="#e4e4e4" stroke-width="1"/><path d="M2.5 11.5l3.5-3" stroke="#111" stroke-width="1.2" opacity="0.6"/></svg></div>
<div class="ti" style="left:48px;top:1104px"><svg width="15" height="14" viewBox="0 0 15 14"><rect x="0" y="2" width="8" height="3.5" fill="#4a70b8"/><rect x="0" y="5.5" width="9" height="3.5" fill="#40a078"/><rect x="0" y="9" width="10" height="4" fill="#d88040"/><path d="M9 1l5 12" stroke="#e8b040" stroke-width="2.4"/></svg></div>
<div class="tt" style="left:68px;top:1099px">JRE System Library <span style="color:#b09a6a">[JavaSE-1.8]</span></div>
<div class="arr" style="left:30px;top:1128px"><svg width="9" height="11" viewBox="0 0 9 11"><path d="M7.5 1v6.5h-6.5z" fill="#e0e0e0"/><path d="M3 9.5h4" stroke="#111" stroke-width="1.2" opacity="0.7"/></svg></div>
<div class="ti" style="left:48px;top:1130px"><svg width="20" height="16" viewBox="0 0 20 16"><path d="M1 3h6l2 2h9v10h-17z" fill="#d8a850"/><path d="M3 7h16l-2 8h-16z" fill="#f4d890"/><rect x="10" y="2" width="3" height="3" fill="#d07a30"/><rect x="14" y="2" width="3" height="3" fill="#d07a30"/></svg></div>
<div class="tt" style="left:68px;top:1127px">src</div>
<div class="arr" style="left:51px;top:1157.5px"><svg width="9" height="12" viewBox="0 0 9 12"><path d="M1 1l4.5 4.5-4.5 4.5z" fill="none" stroke="#e4e4e4" stroke-width="1"/><path d="M2.5 11.5l3.5-3" stroke="#111" stroke-width="1.2" opacity="0.6"/></svg></div>
<div class="ti" style="left:69px;top:1160px"><svg width="12" height="12" viewBox="0 0 12 12"><rect x="0" y="0" width="12" height="12" fill="#f4dcc0"/><rect x="1" y="1" width="4.5" height="4.5" fill="#d88848"/><rect x="6.5" y="1" width="4.5" height="4.5" fill="#d88848"/><rect x="1" y="6.5" width="4.5" height="4.5" fill="#d88848"/><rect x="6.5" y="6.5" width="4.5" height="4.5" fill="#d88848"/></svg></div>
<div class="tt" style="left:87px;top:1155px">net.minemora.SkyWarsCore</div>
<div class="arr" style="left:50px;top:1184px"><svg width="9" height="11" viewBox="0 0 9 11"><path d="M7.5 1v6.5h-6.5z" fill="#e0e0e0"/><path d="M3 9.5h4" stroke="#111" stroke-width="1.2" opacity="0.7"/></svg></div>
<div class="ti" style="left:69px;top:1188px"><svg width="12" height="12" viewBox="0 0 12 12"><rect x="0" y="0" width="12" height="12" fill="#f4dcc0"/><rect x="1" y="1" width="4.5" height="4.5" fill="#d88848"/><rect x="6.5" y="1" width="4.5" height="4.5" fill="#d88848"/><rect x="1" y="6.5" width="4.5" height="4.5" fill="#d88848"/><rect x="6.5" y="6.5" width="4.5" height="4.5" fill="#d88848"/></svg></div>
<div class="tt" style="left:87px;top:1183px">net.minemora.SkyWarsCore.Commands</div>
<div class="arr" style="left:70px;top:1213.5px"><svg width="9" height="12" viewBox="0 0 9 12"><path d="M1 1l4.5 4.5-4.5 4.5z" fill="none" stroke="#e4e4e4" stroke-width="1"/><path d="M2.5 11.5l3.5-3" stroke="#111" stroke-width="1.2" opacity="0.6"/></svg></div>
<div class="ti" style="left:88px;top:1216px"><svg width="13" height="15" viewBox="0 0 13 15"><path d="M0.7 0.7h8l3 3v10.6h-11z" fill="#f4f2ec" stroke="#caa860" stroke-width="1.2"/><path d="M6.6 4v6.2q0 2-2 2h-1.2" fill="none" stroke="#2a5aa0" stroke-width="1.8"/></svg></div>
<div class="tt" style="left:106px;top:1211px">Aceptar.java</div>
<div class="sel" style="top:1236px"></div>
<div class="arr" style="left:70px;top:1241.5px"><svg width="9" height="12" viewBox="0 0 9 12"><path d="M1 1l4.5 4.5-4.5 4.5z" fill="none" stroke="#e4e4e4" stroke-width="1"/><path d="M2.5 11.5l3.5-3" stroke="#111" stroke-width="1.2" opacity="0.6"/></svg></div>
<div class="ti" style="left:88px;top:1244px"><svg width="13" height="15" viewBox="0 0 13 15"><path d="M0.7 0.7h8l3 3v10.6h-11z" fill="#f4f2ec" stroke="#caa860" stroke-width="1.2"/><path d="M6.6 4v6.2q0 2-2 2h-1.2" fill="none" stroke="#2a5aa0" stroke-width="1.8"/></svg></div>
<div class="tt" style="left:106px;top:1239px">Invitar.java</div>
<div class="arr" style="left:70px;top:1269.5px"><svg width="9" height="12" viewBox="0 0 9 12"><path d="M1 1l4.5 4.5-4.5 4.5z" fill="none" stroke="#e4e4e4" stroke-width="1"/><path d="M2.5 11.5l3.5-3" stroke="#111" stroke-width="1.2" opacity="0.6"/></svg></div>
<div class="ti" style="left:88px;top:1272px"><svg width="13" height="15" viewBox="0 0 13 15"><path d="M0.7 0.7h8l3 3v10.6h-11z" fill="#f4f2ec" stroke="#caa860" stroke-width="1.2"/><path d="M6.6 4v6.2q0 2-2 2h-1.2" fill="none" stroke="#2a5aa0" stroke-width="1.8"/></svg></div>
<div class="tt" style="left:106px;top:1267px">Rechazar.java</div>
<div class="arr" style="left:51px;top:1297.5px"><svg width="9" height="12" viewBox="0 0 9 12"><path d="M1 1l4.5 4.5-4.5 4.5z" fill="none" stroke="#e4e4e4" stroke-width="1"/><path d="M2.5 11.5l3.5-3" stroke="#111" stroke-width="1.2" opacity="0.6"/></svg></div>
<div class="ti" style="left:69px;top:1300px"><svg width="12" height="12" viewBox="0 0 12 12"><rect x="0" y="0" width="12" height="12" fill="#f4dcc0"/><rect x="1" y="1" width="4.5" height="4.5" fill="#d88848"/><rect x="6.5" y="1" width="4.5" height="4.5" fill="#d88848"/><rect x="1" y="6.5" width="4.5" height="4.5" fill="#d88848"/><rect x="6.5" y="6.5" width="4.5" height="4.5" fill="#d88848"/></svg></div>
<div class="tt" style="left:87px;top:1295px">net.minemora.SkyWarsCore.Scoreboard</div>
<div class="arr" style="left:31px;top:1325.5px"><svg width="9" height="12" viewBox="0 0 9 12"><path d="M1 1l4.5 4.5-4.5 4.5z" fill="none" stroke="#e4e4e4" stroke-width="1"/><path d="M2.5 11.5l3.5-3" stroke="#111" stroke-width="1.2" opacity="0.6"/></svg></div>
<div class="ti" style="left:48px;top:1328px"><svg width="15" height="14" viewBox="0 0 15 14"><rect x="0" y="2" width="8" height="3.5" fill="#4a70b8"/><rect x="0" y="5.5" width="9" height="3.5" fill="#40a078"/><rect x="0" y="9" width="10" height="4" fill="#d88040"/><path d="M9 1l5 12" stroke="#e8b040" stroke-width="2.4"/></svg></div>
<div class="tt" style="left:68px;top:1323px">Referenced Libraries</div></div>
<div class="abs" style="left:346px;top:112px;width:77px;height:20px;background:#4a4d51;opacity:0.5"></div>
<svg class="abs" style="left:351px;top:114px" width="14" height="14" viewBox="0 0 14 14"><rect x="0.5" y="0.5" width="10" height="10" fill="#c0d0e8" stroke="#7090c0"/><rect x="3.5" y="3.5" width="10" height="10" fill="#d8e4f4" stroke="#7090c0"/><path d="M5.5 9h6" stroke="#1a4a90" stroke-width="1.6"/></svg>
<svg class="abs" style="left:372px;top:113px" width="16" height="16" viewBox="0 0 16 16"><path d="M6 1.5l-4 3 4 3M2 4.5h8" fill="none" stroke="#f0c850" stroke-width="2"/><path d="M10 8.5l4 3-4 3M14 11.5h-8" fill="none" stroke="#f0c850" stroke-width="2"/><path d="M10 4.5v3M6 11.5v-3" stroke="#f0c850" stroke-width="1.6"/></svg>
<div class="abs" style="left:395px;top:112px;width:1px;height:19px;background:#222"></div>
<svg class="abs" style="left:404px;top:114px" width="15" height="14" viewBox="0 0 15 14"><circle cx="5" cy="5" r="4" fill="#b0b0b0"/><circle cx="10" cy="8" r="4" fill="#a8a8a8"/><circle cx="5" cy="10" r="3.5" fill="#9c9c9c"/></svg>
<div class="abs" style="left:426px;top:112px;width:23px;height:20px;background:#4a4d51;opacity:0.6"></div>
<svg class="abs" style="left:437px;top:116px" width="8" height="5" viewBox="0 0 8 5"><path d="M0 0h8l-4 4.5z" fill="#fff"/></svg>
<div class="abs" style="left:456px;top:117px;width:9px;height:3px;background:#fff"></div>
<div class="abs" style="left:478px;top:116px;width:9px;height:1px;background:#fff"></div><div class="abs" style="left:478px;top:118px;width:9px;height:7px;background:#fff"></div>
<svg class="abs" style="left:168px;top:120px" width="12" height="12" viewBox="0 0 12 12"><path d="M1.5 1.5l9 9M10.5 1.5l-9 9" stroke="#fff" stroke-width="2.2"/></svg>
<svg class="abs" style="left:11px;top:118px" width="10" height="16" viewBox="0 0 10 16"><path d="M1 1v13M1 5h3M1 11h3" stroke="#909090" stroke-width="0.8"/><rect x="4" y="2" width="2" height="2" fill="#d88a3a"/><rect x="7" y="2" width="2" height="2" fill="#d88a3a"/><rect x="4" y="5" width="2" height="2" fill="#d88a3a"/><rect x="7" y="5" width="2" height="2" fill="#d88a3a"/><rect x="4" y="9" width="2" height="2" fill="#d88a3a"/><rect x="7" y="9" width="2" height="2" fill="#d88a3a"/><rect x="4" y="12" width="2" height="2" fill="#d88a3a"/><rect x="7" y="12" width="2" height="2" fill="#d88a3a"/></svg>
<div class="abs" style="left:2140.0px;top:109px;width:3px;height:2px;background:#d4d4d4"></div><div class="abs" style="left:2144.5px;top:109px;width:3px;height:2px;background:#d4d4d4"></div><div class="abs" style="left:2149.0px;top:109px;width:3px;height:2px;background:#d4d4d4"></div><div class="abs" style="left:2153.5px;top:109px;width:3px;height:2px;background:#d4d4d4"></div>
<div id="ed"><div id="edh"></div></div>
<div class="abs" style="left:1036px;top:109px;width:133px;height:34px;background:#262729;border-radius:7px 7px 0 0"></div>
<svg class="abs" style="left:514px;top:119px" width="12" height="16" viewBox="0 0 12 16"><path d="M1 1h7l3 3v11h-10z" fill="#f2f0e8" stroke="#c8a860" stroke-width="1.1"/><path d="M6.5 4.5v6.5q0 1.8-2 1.8h-1.3" fill="none" stroke="#2a5aa8" stroke-width="1.8"/></svg>
<div class="abs" style="left:531px;top:118px;font-size:17.3px;line-height:24px;color:#e8e8e8;white-space:pre">GameScoreboard.java</div>
<svg class="abs" style="left:737px;top:119px" width="12" height="16" viewBox="0 0 12 16"><path d="M1 1h7l3 3v11h-10z" fill="#f2f0e8" stroke="#c8a860" stroke-width="1.1"/><path d="M6.5 4.5v6.5q0 1.8-2 1.8h-1.3" fill="none" stroke="#2a5aa8" stroke-width="1.8"/></svg>
<div class="abs" style="left:754px;top:118px;font-size:17.3px;line-height:24px;color:#e8e8e8;white-space:pre">Vector3D.java</div>
<svg class="abs" style="left:896px;top:119px" width="12" height="16" viewBox="0 0 12 16"><path d="M1 1h7l3 3v11h-10z" fill="#f2f0e8" stroke="#c8a860" stroke-width="1.1"/><path d="M6.5 4.5v6.5q0 1.8-2 1.8h-1.3" fill="none" stroke="#2a5aa8" stroke-width="1.8"/></svg>
<div class="abs" style="left:913px;top:118px;font-size:17.3px;line-height:24px;color:#e8e8e8;white-space:pre">Aceptar.java</div>
<svg class="abs" style="left:1042px;top:119px" width="12" height="16" viewBox="0 0 12 16"><path d="M1 1h7l3 3v11h-10z" fill="#f2f0e8" stroke="#c8a860" stroke-width="1.1"/><path d="M6.5 4.5v6.5q0 1.8-2 1.8h-1.3" fill="none" stroke="#2a5aa8" stroke-width="1.8"/></svg>
<div class="abs" style="left:1059px;top:118px;font-size:17.3px;line-height:24px;color:#e8e8e8;white-space:pre">Invitar.java</div>
<svg class="abs" style="left:1150px;top:120px" width="12" height="12" viewBox="0 0 12 12"><path d="M1.5 1.5l9 9M10.5 1.5l-9 9" stroke="#fff" stroke-width="2.2"/></svg>
<div class="abs" style="left:2086px;top:117px;width:10px;height:3px;background:#fff"></div>
<div class="abs" style="left:2109px;top:117px;width:9px;height:1px;background:#fff"></div><div class="abs" style="left:2109px;top:119px;width:9px;height:7px;background:#fff"></div>
<div class="abs" style="left:508px;top:141px;width:1625px;height:4px;background:#262626"></div>
<svg class="abs" style="left:510px;top:145px" width="13" height="23" viewBox="0 0 13 23"><defs><pattern id="chk" width="2" height="2" patternUnits="userSpaceOnUse"><rect width="2" height="2" fill="#1a6ad0"/><rect width="1" height="1" fill="#a0d8ff"/><rect x="1" y="1" width="1" height="1" fill="#a0d8ff"/></pattern></defs><rect width="12" height="23" fill="url(#chk)"/></svg>
<svg class="abs" style="left:554px;top:197px" width="10" height="10" viewBox="0 0 10 10"><circle cx="5" cy="5" r="4.3" fill="#dfe6f0" stroke="#9aa8c0" stroke-width="0.8"/><path d="M2.8 5h4.4" stroke="#2a3a6a" stroke-width="1.3"/><path d="M5 2.8v4.4" stroke="#2a3a6a" stroke-width="1.3"/></svg>
<svg class="abs" style="left:554px;top:381px" width="10" height="10" viewBox="0 0 10 10"><circle cx="5" cy="5" r="4.3" fill="#dfe6f0" stroke="#9aa8c0" stroke-width="0.8"/><path d="M2.8 5h4.4" stroke="#2a3a6a" stroke-width="1.3"/></svg>
<svg class="abs" style="left:511px;top:404px" width="10" height="7" viewBox="0 0 10 7"><path d="M0.5 6.5l4.5-5.5 4.5 5.5z" fill="#c8c0f0" stroke="#6050b0" stroke-width="0.8"/></svg>
<div class="abs" style="left:843px;top:193px;width:11px;height:19px;border:1px solid #9a9a9a"></div>
<div class="abs" style="left:2114px;top:145px;width:4px;height:1204px;background:#3b3b3b"></div><div class="abs" style="left:2114px;top:145px;width:4px;height:676px;background:#4f4f4f"></div>
<div class="abs" style="left:2118px;top:145px;width:12px;height:1204px;background:#1f1f1f"></div><div class="abs" style="left:2130px;top:141px;width:3px;height:1202px;background:#282a2b"></div>
<svg class="abs" style="left:2143px;top:119px" width="10" height="10" viewBox="0 0 10 10"><rect x="0.5" y="3.5" width="6" height="6" fill="none" stroke="#8a7a6a"/><rect x="3.5" y="0.5" width="6" height="6" fill="none" stroke="#8a7a6a"/></svg>
<svg class="abs" style="left:2139px;top:138px" width="15" height="15" viewBox="0 0 15 15"><rect x="0.5" y="0.5" width="9" height="14" fill="#f0f0f8"/><circle cx="5" cy="4.5" r="3" fill="#e02030"/><path d="M2 13a3 3 0 0 1 6 0z" fill="#f0a020"/><path d="M10 1h3l1 3v10h-4" fill="#d8e8f8"/></svg>
<div class="abs" style="left:567px;top:145px;width:1547px;height:23px;background:#4e4e4e"></div>
<div class="cl" style="top:146px"><span class="k">package</span> <span class="pk">net.minemora.SkyWarsCore.Commands</span>;</div>
<div class="ln" style="top:146px">1</div>
<div class="cl" style="top:169px"></div>
<div class="ln" style="top:169px">2</div>
<div class="cl" style="top:192px"><span class="k">import</span> <span class="pk">java.util.HashMap</span>;</div>
<div class="ln" style="top:192px">3</div>
<div class="cl" style="top:215px"></div>
<div class="ln" style="top:215px">16</div>
<div class="cl" style="top:238px"></div>
<div class="ln" style="top:238px">17</div>
<div class="cl" style="top:261px"><span class="k">public</span> <span class="k">class</span> <span class="t">Invitar</span> <span class="k">implements</span> <span class="t">CommandExecutor</span> {</div>
<div class="ln" style="top:261px">18</div>
<div class="cl" style="top:284px"></div>
<div class="ln" style="top:284px">19</div>
<div class="cl" style="top:307px">    <span class="k">public</span> <span class="k">static</span> <span class="t">Map</span>&lt;<span class="t">String</span>,<span class="t">Long</span>&gt; <span class="sf">cooldown</span> = <span class="k">new</span> <span class="m">HashMap</span>&lt;&gt;();</div>
<div class="ln" style="top:307px">20</div>
<div class="cl" style="top:330px">    <span class="k">public</span> <span class="k">static</span> <span class="t">Map</span>&lt;<span class="t">String</span>,<span class="t">String</span>&gt; <span class="sf">pending</span> = <span class="k">new</span> <span class="m">HashMap</span>&lt;&gt;();</div>
<div class="ln" style="top:330px">21</div>
<div class="cl" style="top:353px"></div>
<div class="ln" style="top:353px">22</div>
<div class="cl" style="top:376px">    <span class="a">@Override</span></div>
<div class="ln" style="top:376px">23</div>
<div class="cl" style="top:399px">    <span class="k">public</span> <span class="k">boolean</span> <span class="md">onCommand</span>(<span class="t">CommandSender</span> <span class="vd">sender</span>, <span class="i">Command</span> <span class="vd">command</span>, <span class="t">String</span> <span class="vd">label</span>, <span class="t">String</span>[] <span class="vd">args</span>) {</div>
<div class="ln" style="top:399px">24</div>
<div class="cl" style="top:422px">        <span class="k">if</span>(<span class="v">sender</span> <span class="k">instanceof</span> <span class="t">Player</span>) {</div>
<div class="ln" style="top:422px">25</div>
<div class="cl" style="top:445px">            <span class="t">Player</span> <span class="vd">p</span> = (<span class="t">Player</span>) <span class="v">sender</span>;</div>
<div class="ln" style="top:445px">26</div>
<div class="cl" style="top:468px">            <span class="k">if</span>(<span class="v">args</span>.<span class="f">length</span> == <span class="n">0</span>) {</div>
<div class="ln" style="top:468px">27</div>
<div class="cl" style="top:491px">                <span class="v">p</span>.<span class="m">sendMessage</span>(<span class="s">format</span>(<span class="str">&quot;&amp;eusa &amp;a/invitar &amp;b&lt;jugador&gt;&quot;</span>));</div>
<div class="ln" style="top:491px">28</div>
<div class="cl" style="top:514px">                <span class="k">return</span> <span class="k">true</span>;</div>
<div class="ln" style="top:514px">29</div>
<div class="cl" style="top:537px">            }</div>
<div class="ln" style="top:537px">30</div>
<div class="cl" style="top:560px">            <span class="k">if</span>(<span class="v">args</span>.<span class="f">length</span> &gt; <span class="n">0</span>) {</div>
<div class="ln" style="top:560px">31</div>
<div class="cl" style="top:583px">                <span class="k">if</span>(<span class="sf">cooldown</span>.<span class="m">containsKey</span>(<span class="v">p</span>.<span class="m">getName</span>())) {</div>
<div class="ln" style="top:583px">32</div>
<div class="cl" style="top:606px">                    <span class="k">if</span>((<span class="t">System</span>.<span class="s">currentTimeMillis</span>() - <span class="sf">cooldown</span>.<span class="m">get</span>(<span class="v">p</span>.<span class="m">getName</span>())) &lt; <span class="n">20000</span>) {</div>
<div class="ln" style="top:606px">33</div>
<div class="cl" style="top:629px">                        <span class="v">p</span>.<span class="m">sendMessage</span>(<span class="s">format</span>(<span class="str">&quot;&amp;cDebes esperar antes de volver a usar este comando&quot;</span>));</div>
<div class="ln" style="top:629px">34</div>
<div class="cl" style="top:652px">                        <span class="k">return</span> <span class="k">true</span>;</div>
<div class="ln" style="top:652px">35</div>
<div class="cl" style="top:675px">                    }</div>
<div class="ln" style="top:675px">36</div>
<div class="cl" style="top:698px">                }</div>
<div class="ln" style="top:698px">37</div>
<div class="cl" style="top:721px">                <span class="k">if</span>(<span class="t">Bukkit</span>.<span class="s">getPlayer</span>(<span class="v">args</span>[<span class="n">0</span>])  != <span class="k">null</span>) {</div>
<div class="ln" style="top:721px">38</div>
<div class="cl" style="top:744px">                    <span class="t">Player</span> <span class="vd">reciever</span> = <span class="t">Bukkit</span>.<span class="s">getPlayer</span>(<span class="v">args</span>[<span class="n">0</span>]);</div>
<div class="ln" style="top:744px">39</div>
<div class="cl" style="top:767px">                    <span class="k">if</span>(<span class="v">reciever</span>.<span class="m">getName</span>().<span class="m">equals</span>(<span class="v">p</span>.<span class="m">getName</span>())) {</div>
<div class="ln" style="top:767px">40</div>
<div class="cl" style="top:790px">                        <span class="v">p</span>.<span class="m">sendMessage</span>(<span class="s">format</span>(<span class="str">&quot;&amp;cNo te puedes invitar a ti mismo, ¡Búscate amigos!&quot;</span>));</div>
<div class="ln" style="top:790px">41</div>
<div class="cl" style="top:813px">                        <span class="k">return</span> <span class="k">true</span>;</div>
<div class="ln" style="top:813px">42</div>
<div class="cl" style="top:836px">                    }</div>
<div class="ln" style="top:836px">43</div>
<div class="cl" style="top:859px">                    <span class="k">if</span>(<span class="t">GamePlayer</span>.<span class="s">getGamePlayer</span>(<span class="v">args</span>[<span class="n">0</span>]) == <span class="k">null</span>) {</div>
<div class="ln" style="top:859px">44</div>
<div class="cl" style="top:882px">                        <span class="v">p</span>.<span class="m">sendMessage</span>(<span class="s">format</span>(<span class="str">&quot;&amp;c&quot;</span> + <span class="v">args</span>[<span class="n">0</span>] + <span class="str">&quot; no se encuentra conectado, o has escrito mal el nick.&quot;</span>));</div>
<div class="ln" style="top:882px">45</div>
<div class="cl" style="top:905px">                        <span class="k">return</span> <span class="k">true</span>;</div>
<div class="ln" style="top:905px">46</div>
<div class="cl" style="top:928px">                    }</div>
<div class="ln" style="top:928px">47</div>
<div class="cl" style="top:951px">                    <span class="k">if</span>(<span class="sf">pending</span>.<span class="m">containsKey</span>(<span class="v">p</span>.<span class="m">getName</span>())) {</div>
<div class="ln" style="top:951px">48</div>
<div class="cl" style="top:974px">                        <span class="k">if</span>(<span class="t">Bukkit</span>.<span class="s">getPlayer</span>(<span class="sf">pending</span>.<span class="m">get</span>(<span class="v">p</span>.<span class="m">getName</span>()))  != <span class="k">null</span>) {</div>
<div class="ln" style="top:974px">49</div>
<div class="cl" style="top:997px">                            <span class="t">Bukkit</span>.<span class="s">getPlayer</span>(<span class="sf">pending</span>.<span class="m">get</span>(<span class="v">p</span>.<span class="m">getName</span>())).<span class="m">sendMessage</span>(<span class="s">format</span>(<span class="str">&quot;&amp;e&quot;</span> + <span class="v">p</span>.<span class="m">getName</span>()</div>
<div class="ln" style="top:997px">50</div>
<div class="cl" style="top:1020px">                            + <span class="str">&quot; &amp;cha cancelado la invitacion.&quot;</span>));</div>
<div class="ln" style="top:1020px">51</div>
<div class="cl" style="top:1043px">                        }</div>
<div class="ln" style="top:1043px">52</div>
<div class="cl" style="top:1066px">                    }</div>
<div class="ln" style="top:1066px">53</div>
<div class="cl" style="top:1089px">                    <span class="v">p</span>.<span class="m">sendMessage</span>(<span class="s">format</span>(<span class="str">&quot;&amp;aHas enviado una invitacion a &amp;b&quot;</span> + <span class="v">args</span>[<span class="n">0</span>]));</div>
<div class="ln" style="top:1089px">54</div>
<div class="cl" style="top:1112px">                    <span class="k">if</span>(!<span class="t">GamePlayer</span>.<span class="s">getGamePlayer</span>(<span class="v">args</span>[<span class="n">0</span>]).<span class="m">getEquipo</span>().<span class="m">equals</span>(<span class="str">&quot;NULL&quot;</span>)) {</div>
<div class="ln" style="top:1112px">55</div>
<div class="cl" style="top:1135px">                        <span class="t">String</span>[] <span class="vd">up</span> = {</div>
<div class="ln" style="top:1135px">56</div>
<div class="cl" style="top:1158px">                                <span class="str">&quot;&amp;6&amp;l&amp;m-----------------------------------------&quot;</span>,</div>
<div class="ln" style="top:1158px">57</div>
<div class="cl" style="top:1181px">                                <span class="str">&quot; &amp;7Has recibido una invitacion de: &amp;e&quot;</span> + <span class="v">p</span>.<span class="m">getName</span>(),</div>
<div class="ln" style="top:1181px">58</div>
<div class="cl" style="top:1204px">                                <span class="str">&quot;    &amp;cSi aceptas abandonaras tu equipo actual.&quot;</span></div>
<div class="ln" style="top:1204px">59</div>
<div class="cl" style="top:1227px">                        };</div>
<div class="ln" style="top:1227px">60</div>
<div class="cl" style="top:1250px">                        <span class="v">reciever</span>.<span class="m">sendMessage</span>(<span class="s">format</span>(<span class="v">up</span>));</div>
<div class="ln" style="top:1250px">61</div>
<div class="cl" style="top:1273px">                    }</div>
<div class="ln" style="top:1273px">62</div>
<div class="cl" style="top:1296px">                    <span class="k">else</span> {</div>
<div class="ln" style="top:1296px">63</div>
<div class="cl" style="top:1319px">                        <span class="t">String</span>[] <span class="vd">up</span> = {</div>
<div class="ln" style="top:1319px">64</div>
<div class="cl" style="top:1342px">                                <span class="str">&quot;&amp;6&amp;l&amp;m-----------------------------------------&quot;</span>,</div>
<div class="ln" style="top:1342px">65</div>
<div id="status"></div>
<div class="ssep" style="left:1109px"></div>
<div class="ssep" style="left:1273px"></div>
<div class="ssep" style="left:1427px"></div>
<div class="st" style="left:1116px">Writable</div>
<div class="st" style="left:1280px">Smart Insert</div>
<div class="st" style="left:1435px">1 : 1</div>
<div class="abs" style="left:1578px;top:1356px;width:2px;height:2px;background:#cfcfcf"></div><div class="abs" style="left:1578px;top:1362px;width:2px;height:2px;background:#cfcfcf"></div><div class="abs" style="left:1578px;top:1368px;width:2px;height:2px;background:#cfcfcf"></div><div class="abs" style="left:1578px;top:1374px;width:2px;height:2px;background:#cfcfcf"></div>
<div class="abs" style="left:2008px;top:1358px;width:2px;height:2px;background:#cfcfcf"></div><div class="abs" style="left:2008px;top:1363px;width:2px;height:2px;background:#cfcfcf"></div><div class="abs" style="left:2008px;top:1368px;width:2px;height:2px;background:#cfcfcf"></div><div class="abs" style="left:2008px;top:1373px;width:2px;height:2px;background:#cfcfcf"></div>
<div class="abs" style="left:2012px;top:1355px;width:125px;height:24px;border:1px solid #9a9ea2;border-bottom:none"></div>
<svg class="abs" style="left:2016px;top:1361px" width="17" height="14" viewBox="0 0 17 14"><path d="M1 6l5-4v2.5h5v3h-5v2.5z" fill="#f0f0f0"/><rect x="8" y="6" width="8" height="7" fill="#e8c050"/><path d="M7 6l5-4 5 4z" fill="#f0d070"/></svg>
<div class="abs" style="left:2039px;top:1358px;width:1px;height:20px;background:#202020"></div>
<svg class="abs" style="left:2048px;top:1360px" width="15" height="14" viewBox="0 0 15 14"><path d="M1 2l4-1.5 4 1.5 5-1.5v11l-5 1.5-4-1.5-4 1.5z" fill="none" stroke="#d08a30" stroke-width="1.3"/><path d="M5 1v11M9 2v11" stroke="#d08a30" stroke-width="1.1"/></svg>
<svg class="abs" style="left:2070px;top:1360px" width="16" height="13" viewBox="0 0 16 13"><path d="M0.5 5l7.5-4 7.5 4-7.5 4z" fill="#e89a30"/><path d="M3 6.5v4q5 2.5 10 0v-4l-5 2.5z" fill="#e89a30"/><path d="M14 5v5" stroke="#e89a30"/></svg>
<svg class="abs" style="left:2094px;top:1360px" width="14" height="14" viewBox="0 0 14 14"><path d="M1 13l10-10" stroke="#e89a30" stroke-width="2.4"/><path d="M9 1l1 1M12 3l1 .5M11 0.5v1" stroke="#e89a30"/></svg>
<svg class="abs" style="left:2117px;top:1360px" width="15" height="15" viewBox="0 0 15 15"><circle cx="7.5" cy="7.5" r="6.5" fill="none" stroke="#c8822a" stroke-width="1.4"/><path d="M7.5 3.5l1.2 2.6 2.8.3-2.1 1.9.6 2.8-2.5-1.4-2.5 1.4.6-2.8-2.1-1.9 2.8-.3z" fill="none" stroke="#c8822a" stroke-width="1"/></svg>
<svg class="abs" style="left:2140px;top:1359px" width="17" height="17" viewBox="0 0 17 17"><rect x="0" y="0" width="16" height="16" rx="2.5" fill="#f28a2a"/><circle cx="4.5" cy="11.5" r="1.6" fill="#fff"/><path d="M3.5 7a5.5 5.5 0 0 1 5.5 5.5M3.5 3.5a9 9 0 0 1 9 9" fill="none" stroke="#fff" stroke-width="1.8"/></svg>
<div id="task"></div>
<svg class="abs" style="left:24px;top:1398px" width="25" height="25" viewBox="0 0 25 25"><path d="M0 3.5l10-1.4v9.5h-10zM11.5 1.9l13.5-1.9v11.6h-13.5zM0 13h10v9.6l-10-1.4zM11.5 13h13.5v12l-13.5-1.9z" fill="#fff"/></svg>
<svg class="abs" style="left:95px;top:1397px" width="26" height="26" viewBox="0 0 26 26"><path d="M1 1v2h15v-2M1 25v-2h15v2" fill="none" stroke="#fff" stroke-width="1.2"/><rect x="1.5" y="6.5" width="14" height="13" fill="none" stroke="#fff" stroke-width="1.2"/><path d="M23 1v24" stroke="#fff" stroke-width="1.2"/><rect x="21.5" y="11" width="3" height="3" fill="#fff"/></svg>
<svg class="abs" style="left:167.5px;top:1393px" width="34" height="34" viewBox="2 2 44 44"><circle cx="24" cy="24" r="22" fill="#2da94f"/><path d="M24 13H43.05A22 22 0 0 0 4.95 13L14.47 29.5A11 11 0 0 1 24 13z" fill="#db4437"/><path d="M24 13H43.05A22 22 0 0 0 4.95 13L14.47 29.5A11 11 0 0 1 24 13z" fill="#fcc934" transform="rotate(120 24 24)"/><path d="M24 13H43.05A22 22 0 0 0 4.95 13L14.47 29.5A11 11 0 0 1 24 13z" fill="#2da94f" transform="rotate(240 24 24)"/><circle cx="24" cy="24" r="10.2" fill="#fff"/><circle cx="24" cy="24" r="8.3" fill="#4285f4"/></svg>
<div class="abs" style="left:155px;top:1437px;width:61px;height:3px;background:#76b9ed"></div>
<div class="abs" style="left:224px;top:1380px;width:73px;height:60px;background:#333333"></div>
<div class="abs" style="left:224px;top:1437px;width:73px;height:3px;background:#76b9ed"></div>
<svg class="abs" style="left:242px;top:1393px" width="37" height="33" viewBox="0 0 37 33"><circle cx="17.5" cy="16.5" r="16" fill="#f7941e"/><circle cx="20" cy="16.5" r="15.5" fill="#2c2255"/><rect x="4.5" y="12.2" width="30" height="1.9" fill="#f4f0ff"/><rect x="4.5" y="15.8" width="30" height="1.9" fill="#f4f0ff"/><rect x="4.5" y="19.4" width="30" height="1.9" fill="#f4f0ff"/></svg>
<svg class="abs" style="left:1780px;top:1397px" width="24" height="25" viewBox="0 0 24 25"><circle cx="15.5" cy="6" r="4" fill="none" stroke="#fff" stroke-width="1.3"/><path d="M10 16a6 6 0 0 1 11 -1" fill="none" stroke="#fff" stroke-width="1.3"/><circle cx="7.5" cy="14" r="4" fill="none" stroke="#fff" stroke-width="1.3"/><path d="M1.5 24a6.3 6.3 0 0 1 12 0" fill="none" stroke="#fff" stroke-width="1.3"/></svg>
<svg class="abs" style="left:1836px;top:1403px" width="20" height="12" viewBox="0 0 20 12"><path d="M1 10.5l9-9 9 9" fill="none" stroke="#fff" stroke-width="1.3"/></svg>
<svg class="abs" style="left:1877px;top:1399px" width="22" height="22" viewBox="0 0 22 22"><path d="M6.5 20l9-16.5a1.6 1.6 0 0 1 2.8 1.5l-9 16.5z" fill="none" stroke="#fff" stroke-width="1.2"/><path d="M7 10.5a4.5 4.5 0 0 0 0.5 9.5" fill="none" stroke="#fff" stroke-width="1.2"/><path d="M15.5 9.5h3.5a1.8 1.8 0 0 0 0-3.5" fill="none" stroke="#fff" stroke-width="1.2"/></svg>
<div class="abs" style="left:1924px;top:1399px;font-size:17px;line-height:22px;color:#fff">ESP</div>
<div class="abs" style="left:2007px;top:1387px;font-size:17.3px;line-height:22px;color:#fff">1:55</div>
<div class="abs" style="left:1976px;top:1414.5px;font-size:17.8px;line-height:22px;color:#fff">14/12/2018</div>
<svg class="abs" style="left:2097px;top:1397px" width="27" height="27" viewBox="0 0 27 27"><path d="M1 1h24v18h-9l-3.5 3.5-3.5-3.5h-8z" fill="none" stroke="#fff" stroke-width="1.3"/></svg>
<div class="abs" style="left:2153px;top:1380px;width:1px;height:60px;background:#8a8a8a"></div>
</body></html>
